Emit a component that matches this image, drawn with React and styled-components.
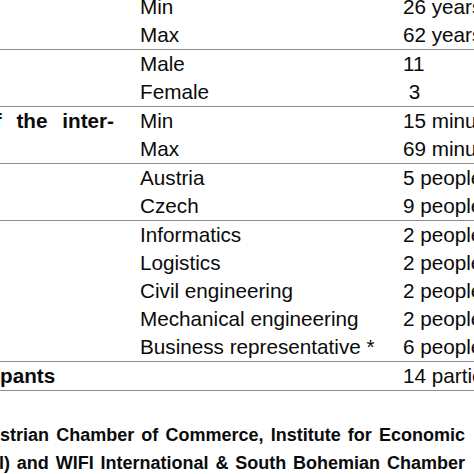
import React from 'react';
import styled, { createGlobalStyle } from 'styled-components';

const GlobalStyle = createGlobalStyle`
  html, body {
    margin: 0;
    padding: 0;
    background: #fff;
    overflow: hidden;
  }
`;

const groups = [
  { label: 'Age', rows: [['Min', '26 years'], ['Max', '62 years']] },
  { label: 'Gender', rows: [['Male', '11'], ['Female', '\u00a03']] },
  {
    label: 'Average durations of the inter- views',
    rows: [['Min', '15 minutes'], ['Max', '69 minutes']]
  },
  { label: 'Country', rows: [['Austria', '5 people'], ['Czech', '9 people']] },
  {
    label: 'Field',
    rows: [
      ['Informatics', '2 people'],
      ['Logistics', '2 people'],
      ['Civil engineering', '2 people'],
      ['Mechanical engineering', '2 people'],
      ['Business representative *', '6 people']
    ]
  },
  { label: 'Total number of participants', rows: [['', '14 participants']] }
];

const captionLines = [
  { text: 'Austrian Chamber of Commerce, Institute for Economic', offset: -24 },
  { text: 'Regional) and WIFI International & South Bohemian Chamber', offset: -72 }
];

const App = () => {
  return (
    <Page>
      <GlobalStyle />
      <Table>
        {groups.map((group) => (
          <Group key={group.label}>
            <Label $span={group.rows.length}>{group.label}</Label>
            {group.rows.map(([sub, value], i) => (
              <React.Fragment key={i}>
                <Cell>{sub}</Cell>
                <Cell>{value}</Cell>
              </React.Fragment>
            ))}
          </Group>
        ))}
      </Table>

      <Caption>
        {captionLines.map((line) => (
          <CaptionLine key={line.text} $offset={line.offset}>
            {line.text}
          </CaptionLine>
        ))}
      </Caption>
    </Page>
  );
};

const Page = styled.div`
  width: 474px;
  height: 474px;
  overflow: hidden;
  background: #fff;
  color: #0b0b0b;
  font-family: "Liberation Sans", Arial, Helvetica, sans-serif;
`;

const Table = styled.div`
  margin: -7px 0 0 -222.5px;
  width: 850px;
`;

const Group = styled.div`
  display: grid;
  grid-template-columns: 336.5px 237px 220px;
  column-gap: 26px;
  grid-auto-rows: 28px;
  border-bottom: 1px solid #8e8e8e;
  font-size: 20.7px;
  line-height: 28px;
`;

const Label = styled.div`
  grid-column: 1;
  grid-row: 1 / span ${(p) => p.$span};
  font-weight: 700;
  text-align: justify;
`;

const Cell = styled.div`
  white-space: nowrap;
`;

const Caption = styled.div`
  margin-top: 30px;
  font-size: 18px;
  font-weight: 700;
  line-height: 28px;
`;

const CaptionLine = styled.div`
  margin-left: ${(p) => p.$offset}px;
  width: ${(p) => 465 - p.$offset}px;
  text-align: justify;
  text-align-last: justify;
  white-space: nowrap;
`;

export default App;
